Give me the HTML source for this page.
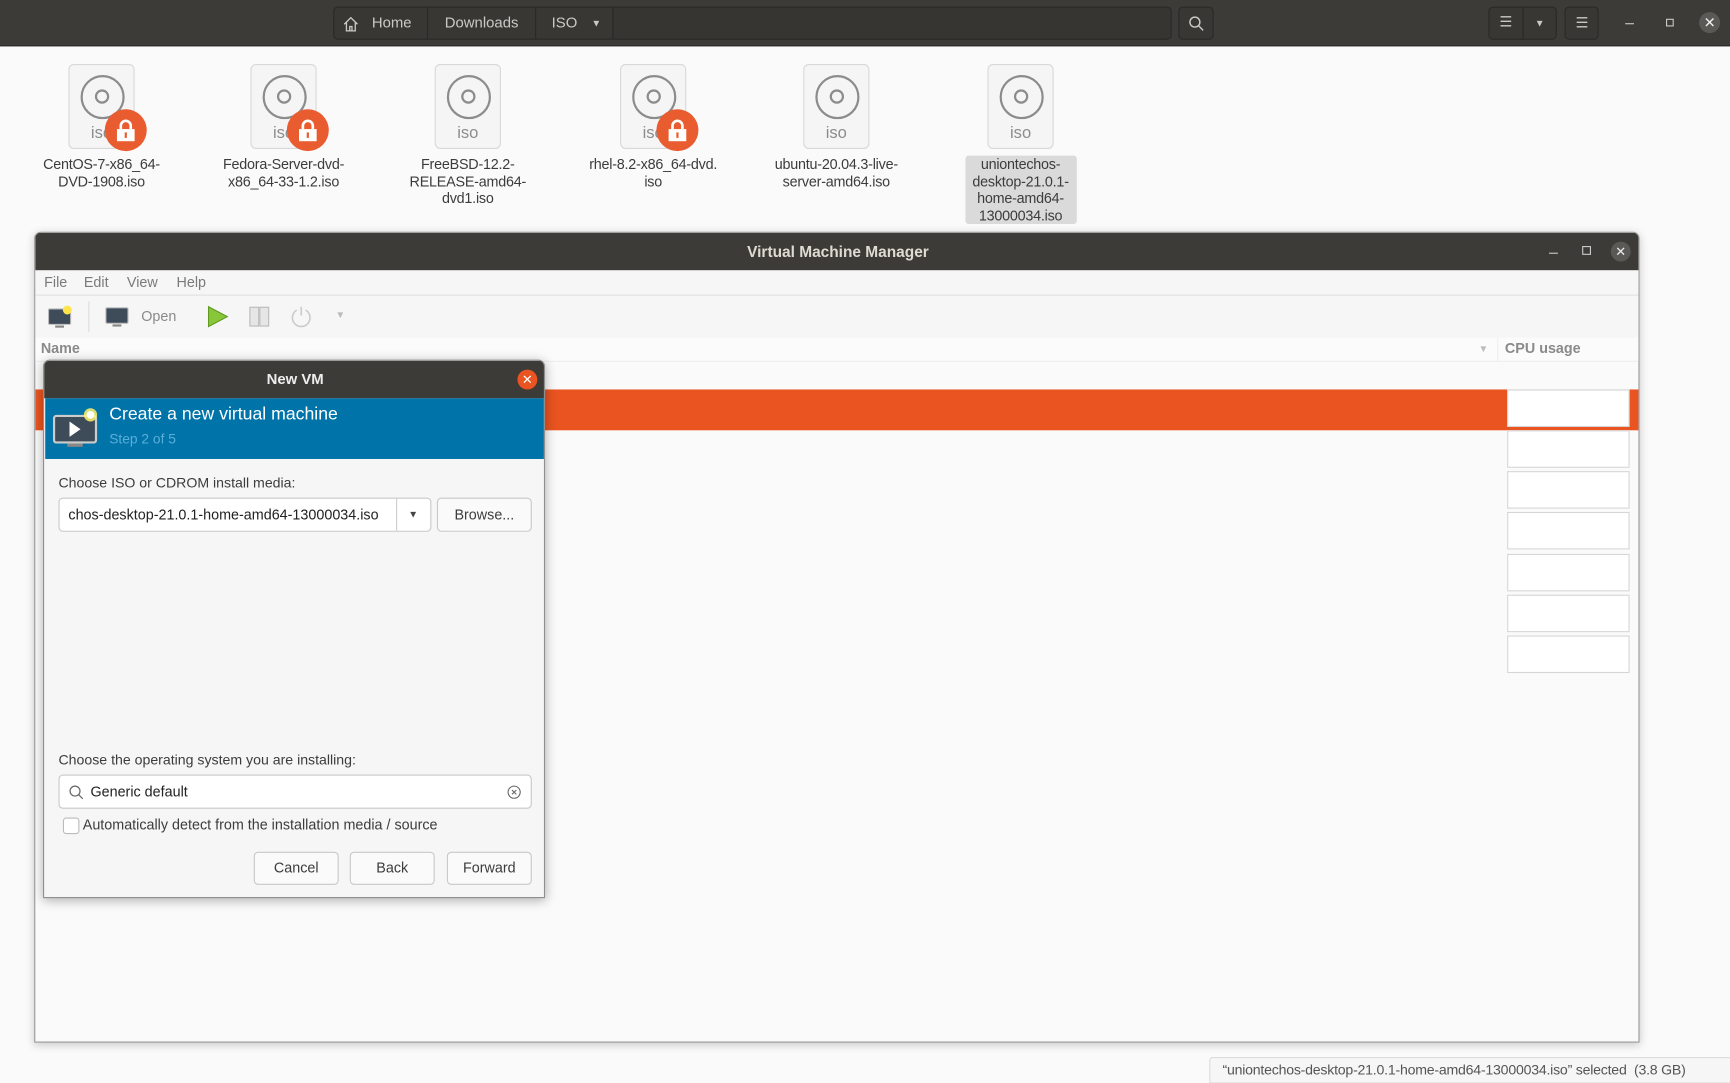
<!DOCTYPE html>
<html><head><meta charset="utf-8"><style>
*{box-sizing:border-box;margin:0;padding:0}
html,body{width:1730px;height:1080px;overflow:hidden;background:#fafafa;font-family:"Liberation Sans",sans-serif}
#w{position:absolute;left:0;top:0;width:1568px;height:979px;transform:scale(1.10332);transform-origin:0 0;background:#fafafa}
.a{position:absolute}
.top{left:0;top:0;width:1568px;height:42px;background:#3c3b37;border-bottom:1px solid #2c2b28}
.seg{position:absolute;top:6px;height:30px;border:1px solid #2a2927;background:#383734;color:#c9c9c6;font-size:13.5px;line-height:28px}
.icon{position:absolute;top:58px;width:60px;height:77px;border:1px solid #d8d8d8;border-radius:5px;background:#f5f5f5}
.icon .d{position:absolute;left:10px;top:9px;width:40px;height:40px;border:2.5px solid #8c8c8c;border-radius:50%}
.icon .d:after{content:"";position:absolute;left:11px;top:11px;width:13px;height:13px;border:2.5px solid #8c8c8c;border-radius:50%;box-sizing:border-box}
.icon .t{position:absolute;left:0;width:58px;top:53px;text-align:center;color:#8c8c8c;font-size:15px}
.lock{position:absolute;left:32px;top:40px;width:38px;height:38px;border-radius:50%;background:#e95c2f}
.lbl{position:absolute;top:141px;width:120px;text-align:center;font-size:13px;line-height:15.5px;color:#3c3c3c;letter-spacing:-0.2px}
.cpu{position:absolute;left:1366px;width:111px;height:34px;background:#fff;border:1px solid #d6d6d6}
.btn{position:absolute;height:30px;border:1px solid #c8c8c8;border-radius:4px;background:#fafafa;font-size:13px;color:#3c3c3c;text-align:center;line-height:28px}
</style></head><body><div id="w">
<div class="a top">
 <div class="seg" style="left:302px;width:86px;border-radius:4px 0 0 4px"><svg class="a" style="left:7px;top:7px" width="16" height="16" viewBox="0 0 16 16"><path d="M2 8 L8 2 L14 8 M4 6.5 V14 H12 V6.5 M7 14 V10 H9 V14" fill="none" stroke="#c9c9c6" stroke-width="1.2"/></svg><span class="a" style="left:34px">Home</span></div>
 <div class="seg" style="left:387px;width:99px;text-align:center">Downloads</div>
 <div class="seg" style="left:485px;width:71px"><span class="a" style="left:14px">ISO</span><span class="a" style="left:50px;font-size:9px">▼</span></div>
 <div class="seg" style="left:555px;width:507px;border-radius:0 4px 4px 0;background:#363532"></div>
 <div class="seg" style="left:1068px;width:32px;border-radius:4px"><svg class="a" style="left:8px;top:7px" width="15" height="15"><circle cx="6" cy="6" r="4.5" fill="none" stroke="#c9c9c6" stroke-width="1.3"/><path d="M9.5 9.5 L13.5 13.5" stroke="#c9c9c6" stroke-width="1.3"/></svg></div>
 <div class="seg" style="left:1349px;width:32px;border-radius:4px 0 0 4px"><span class="a" style="left:9px;top:-1px;font-size:13px">☰</span></div>
 <div class="seg" style="left:1380px;width:31px;border-radius:0 4px 4px 0"><span class="a" style="left:10px;font-size:9px">▼</span></div>
 <div class="seg" style="left:1418px;width:31px;border-radius:4px"><span class="a" style="left:9px;font-size:13px">☰</span></div>
 <div class="a" style="left:1473px;top:21px;width:8px;height:1px;background:#c9c9c6"></div>
 <div class="a" style="left:1510px;top:17px;width:7px;height:7px;border:1px solid #c9c9c6"></div>
 <div class="a" style="left:1540px;top:11px;width:19px;height:19px;border-radius:50%;background:#5a5955;color:#eee;font-size:13px;text-align:center;line-height:19px">✕</div>
</div>

<div class="icon" style="left:62px"><div class="d"></div><div class="t">iso</div><div class="lock"><svg class="a" style="left:10px;top:8px" width="18" height="22"><path d="M4.5 10 V7 a4.5 4.5 0 0 1 9 0 V10" fill="none" stroke="#fff" stroke-width="2.4"/><rect x="1" y="10" width="16" height="11" fill="#fff"/><rect x="8" y="13" width="2" height="5" fill="#e95c2f"/></svg></div></div>
<div class="icon" style="left:227px"><div class="d"></div><div class="t">iso</div><div class="lock"><svg class="a" style="left:10px;top:8px" width="18" height="22"><path d="M4.5 10 V7 a4.5 4.5 0 0 1 9 0 V10" fill="none" stroke="#fff" stroke-width="2.4"/><rect x="1" y="10" width="16" height="11" fill="#fff"/><rect x="8" y="13" width="2" height="5" fill="#e95c2f"/></svg></div></div>
<div class="icon" style="left:394px"><div class="d"></div><div class="t">iso</div></div>
<div class="icon" style="left:562px"><div class="d"></div><div class="t">iso</div><div class="lock"><svg class="a" style="left:10px;top:8px" width="18" height="22"><path d="M4.5 10 V7 a4.5 4.5 0 0 1 9 0 V10" fill="none" stroke="#fff" stroke-width="2.4"/><rect x="1" y="10" width="16" height="11" fill="#fff"/><rect x="8" y="13" width="2" height="5" fill="#e95c2f"/></svg></div></div>
<div class="icon" style="left:728px"><div class="d"></div><div class="t">iso</div></div>
<div class="icon" style="left:895px"><div class="d"></div><div class="t">iso</div></div>
<div class="lbl" style="left:32px">CentOS-7-x86_64-<br>DVD-1908.iso</div>
<div class="lbl" style="left:197px">Fedora-Server-dvd-<br>x86_64-33-1.2.iso</div>
<div class="lbl" style="left:364px">FreeBSD-12.2-<br>RELEASE-amd64-<br>dvd1.iso</div>
<div class="lbl" style="left:532px">rhel-8.2-x86_64-dvd.<br>iso</div>
<div class="lbl" style="left:698px">ubuntu-20.04.3-live-<br>server-amd64.iso</div>
<div class="a" style="left:875px;top:141px;width:101px;height:62px;background:#dadada;border-radius:3px"></div>
<div class="lbl" style="left:865px">uniontechos-<br>desktop-21.0.1-<br>home-amd64-<br>13000034.iso</div>

<!-- VMM -->
<div class="a" style="left:31px;top:210px;width:1455px;height:735px;background:#fafafa;border:1px solid #9a9a9a;border-radius:6px 6px 0 0;box-shadow:0 2px 8px rgba(0,0,0,.2);overflow:hidden">
 <div class="a" style="left:0;top:0;width:1455px;height:34px;background:#3d3b38;color:#dfdbd2;font-weight:bold;font-size:14px;text-align:center;line-height:34px">Virtual Machine Manager</div>
 <div class="a" style="left:1372px;top:18px;width:8px;height:1px;background:#ccc"></div>
 <div class="a" style="left:1402px;top:12px;width:8px;height:8px;border:1px solid #ccc"></div>
 <div class="a" style="left:1428px;top:8px;width:18px;height:18px;border-radius:50%;background:#5a5955;color:#eee;font-size:12px;text-align:center;line-height:18px">✕</div>
 <div class="a" style="left:0;top:34px;width:1455px;height:23px;background:#f6f6f6;border-bottom:1px solid #dcdcdc;font-size:13px;color:#7a7a7a;line-height:22px"><span class="a" style="left:8px">File</span><span class="a" style="left:44px">Edit</span><span class="a" style="left:83px">View</span><span class="a" style="left:128px">Help</span></div>
 <div class="a" style="left:0;top:57px;width:1455px;height:38px;background:#f6f6f6">
  <svg class="a" style="left:10px;top:8px" width="26" height="24"><rect x="2" y="4" width="20" height="14" rx="1" fill="#3e4b59" stroke="#bbb"/><rect x="8" y="19" width="8" height="2" fill="#888"/><circle cx="19" cy="5" r="4" fill="#ffe44d"/></svg>
  <div class="a" style="left:48px;top:5px;width:1px;height:28px;background:#ddd"></div>
  <svg class="a" style="left:63px;top:9px" width="24" height="22"><rect x="1" y="2" width="20" height="14" rx="1" fill="#3e4b59" stroke="#bbb"/><rect x="7" y="17" width="8" height="2" fill="#888"/></svg>
  <span class="a" style="left:96px;top:11px;font-size:13px;color:#8a8a8a">Open</span>
  <svg class="a" style="left:154px;top:8px" width="24" height="22"><path d="M3 2 L20 11 L3 20Z" fill="#8ac63a" stroke="#5f9a20"/></svg>
  <div class="a" style="left:194px;top:10px;width:9px;height:18px;background:#e6e6e6;border:1px solid #bbb"></div>
  <div class="a" style="left:203px;top:10px;width:9px;height:18px;background:#e6e6e6;border:1px solid #bbb"></div>
  <svg class="a" style="left:230px;top:8px" width="22" height="22"><path d="M7 5 A8 8 0 1 0 15 5" fill="none" stroke="#ccc" stroke-width="1.5"/><path d="M11 2 V10" stroke="#ccc" stroke-width="1.5"/></svg>
  <span class="a" style="left:272px;top:12px;font-size:9px;color:#bbb">▼</span>
 </div>
 <div class="a" style="left:0;top:95px;width:1455px;height:22px;background:#fbfbfb;border-bottom:1px solid #eee;font-size:13px;font-weight:bold;color:#8a8a8a;line-height:20px"><span class="a" style="left:5px">Name</span><span class="a" style="left:1308px;font-size:9px;color:#bbb">▼</span><div class="a" style="left:1325px;top:0;width:1px;height:22px;background:#eee"></div><span class="a" style="left:1332px">CPU usage</span></div>
 <div class="a" style="left:0;top:142px;width:1455px;height:37px;background:#e95420"></div>
</div>
<div class="cpu" style="top:353px"></div><div class="cpu" style="top:390px"></div><div class="cpu" style="top:427px"></div><div class="cpu" style="top:464px"></div><div class="cpu" style="top:502px"></div><div class="cpu" style="top:539px"></div><div class="cpu" style="top:576px"></div>

<!-- Dialog -->
<div class="a" style="left:39px;top:326px;width:455px;height:488px;background:#f6f6f6;border:1px solid #8f8f8f;border-radius:6px 6px 0 0;box-shadow:0 2px 10px rgba(0,0,0,.3);overflow:hidden">
 <div class="a" style="left:0;top:0;width:455px;height:34px;background:#3d3b38;color:#eee;font-weight:bold;font-size:13.5px;text-align:center;line-height:34px">New VM</div>
 <div class="a" style="left:429px;top:8px;width:18px;height:18px;border-radius:50%;background:#e95420;color:#fff;font-size:12px;text-align:center;line-height:18px">✕</div>
 <div class="a" style="left:1px;top:34px;width:452px;height:55px;background:#0073a8">
  <svg class="a" style="left:6px;top:8px" width="44" height="40"><rect x="2" y="8" width="38" height="24" rx="2" fill="#3e4b59" stroke="#ccc" stroke-width="2"/><path d="M16 13 L26 20 L16 27Z" fill="#fff"/><rect x="14" y="33" width="14" height="3" fill="#888"/><circle cx="35" cy="7" r="6" fill="#fff36a" opacity=".85"/><circle cx="35" cy="7" r="3.5" fill="#fff"/></svg>
  <div class="a" style="left:58px;top:6px;color:#fff;font-size:16px">Create a new virtual machine</div>
  <div class="a" style="left:58px;top:30px;color:#5aaedb;font-size:12.5px">Step 2 of 5</div>
 </div>
 <div class="a" style="left:13px;top:103px;font-size:12.8px;color:#3c3c3c">Choose ISO or CDROM install media:</div>
 <div class="a" style="left:13px;top:124px;width:338px;height:31px;background:#fff;border:1px solid #c8c8c8;border-radius:4px;font-size:13px;color:#222;line-height:29px;padding-left:8px;overflow:hidden;white-space:nowrap">chos-desktop-21.0.1-home-amd64-13000034.iso<div class="a" style="left:305px;top:0;width:1px;height:29px;background:#ccc"></div><span class="a" style="left:316px;top:0;font-size:9px;color:#444">▼</span></div>
 <div class="btn" style="left:356px;top:124px;width:86px;height:31px;line-height:29px">Browse...</div>
 <div class="a" style="left:13px;top:354px;font-size:12.8px;color:#3c3c3c">Choose the operating system you are installing:</div>
 <div class="a" style="left:13px;top:375px;width:429px;height:31px;background:#fff;border:1px solid #c8c8c8;border-radius:4px;font-size:13px;color:#222;line-height:29px;padding-left:28px">Generic default
  <svg class="a" style="left:8px;top:8px" width="14" height="14"><circle cx="6" cy="6" r="4.5" fill="none" stroke="#666" stroke-width="1.1"/><path d="M9.3 9.3 L13 13" stroke="#666" stroke-width="1.1"/></svg>
  <svg class="a" style="left:405px;top:8px" width="14" height="14"><circle cx="7" cy="7" r="5.5" fill="none" stroke="#666" stroke-width="1"/><path d="M5 5 L9 9 M9 5 L5 9" stroke="#666"/></svg></div>
 <div class="a" style="left:17px;top:414px;width:15px;height:15px;border:1px solid #bbb;border-radius:3px;background:#fff"></div>
 <div class="a" style="left:35px;top:413px;font-size:13px;color:#3c3c3c">Automatically detect from the installation media / source</div>
 <div class="btn" style="left:190px;top:445px;width:77px">Cancel</div>
 <div class="btn" style="left:277px;top:445px;width:77px">Back</div>
 <div class="btn" style="left:365px;top:445px;width:77px">Forward</div>
</div>

<div class="a" style="left:1096px;top:958px;width:480px;height:24px;background:#f6f6f6;border:1px solid #dcdcdc;border-radius:3px 0 0 0;font-size:12.8px;color:#555;line-height:21px;padding-left:11px;white-space:nowrap;letter-spacing:-0.2px">“uniontechos-desktop-21.0.1-home-amd64-13000034.iso” selected &nbsp;(3.8 GB)</div>
</div></body></html>
